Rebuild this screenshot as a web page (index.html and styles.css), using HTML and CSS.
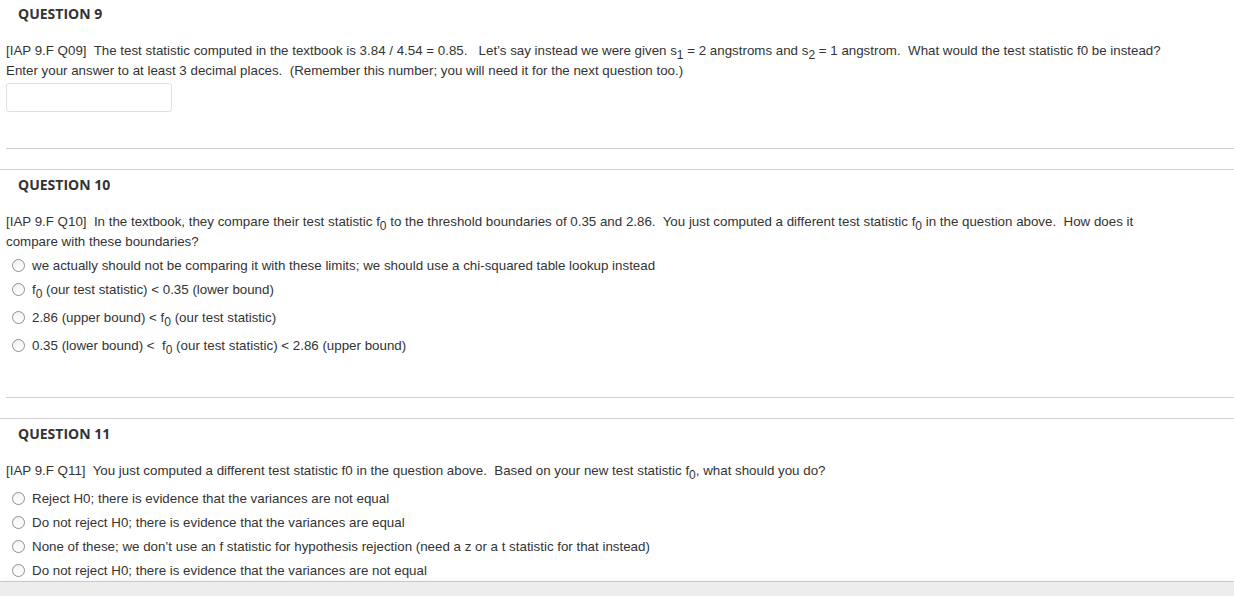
FILE: index.html
```html
<!DOCTYPE html>
<html lang="en">
<head>
<meta charset="utf-8">
<title>Quiz</title>
<link rel="stylesheet" href="styles.css">
</head>
<body>
<main class="quiz">
  <section class="question question-first">
    <h3 class="q-title">QUESTION 9</h3>
    <div class="q-body">
      <p class="q-text">[IAP 9.F Q09]&nbsp; The test statistic computed in the textbook is 3.84 / 4.54 = 0.85. &nbsp; Let’s say instead we were given s<sub>1</sub> = 2 angstroms and s<sub>2</sub> = 1 angstrom.&nbsp; What would the test statistic f0 be instead?<br>Enter your answer to at least 3 decimal places.&nbsp; (Remember this number; you will need it for the next question too.)</p>
      <input class="answer" type="text" aria-label="Answer">
    </div>
  </section>

  <section class="question">
    <h3 class="q-title">QUESTION 10</h3>
    <div class="q-body">
      <p class="q-text">[IAP 9.F Q10]&nbsp; In the textbook, they compare their test statistic f<sub>0</sub> to the threshold boundaries of 0.35 and 2.86.&nbsp; You just computed a different test statistic f<sub>0</sub> in the question above.&nbsp; How does it<br>compare with these boundaries?</p>
      <ul class="options">
        <li class="option"><input class="radio" type="radio" name="q10"><span>we actually should not be comparing it with these limits; we should use a chi-squared table lookup instead</span></li>
        <li class="option"><input class="radio" type="radio" name="q10"><span>f<sub>0</sub> (our test statistic) &lt; 0.35 (lower bound)</span></li>
        <li class="option"><input class="radio" type="radio" name="q10"><span>2.86 (upper bound) &lt; f<sub>0</sub> (our test statistic)</span></li>
        <li class="option"><input class="radio" type="radio" name="q10"><span>0.35 (lower bound) &lt;&nbsp; f<sub>0</sub> (our test statistic) &lt; 2.86 (upper bound)</span></li>
      </ul>
    </div>
  </section>

  <section class="question">
    <h3 class="q-title">QUESTION 11</h3>
    <div class="q-body">
      <p class="q-text">[IAP 9.F Q11]&nbsp; You just computed a different test statistic f0 in the question above.&nbsp; Based on your new test statistic f<sub>0</sub>, what should you do?</p>
      <ul class="options options-spaced">
        <li class="option"><input class="radio" type="radio" name="q11"><span>Reject H0; there is evidence that the variances are not equal</span></li>
        <li class="option"><input class="radio" type="radio" name="q11"><span>Do not reject H0; there is evidence that the variances are equal</span></li>
        <li class="option"><input class="radio" type="radio" name="q11"><span>None of these; we don’t use an f statistic for hypothesis rejection (need a z or a t statistic for that instead)</span></li>
        <li class="option"><input class="radio" type="radio" name="q11"><span>Do not reject H0; there is evidence that the variances are not equal</span></li>
      </ul>
    </div>
  </section>
</main>
<footer class="footer-bar"></footer>
</body>
</html>
```

FILE: styles.css
```css
html, body {
  margin: 0;
  padding: 0;
  background: #fff;
}

body {
  font-family: "Liberation Sans", Arial, sans-serif;
  font-size: 13.333px;
  line-height: 19px;
  color: #333;
  overflow: hidden;
}

.quiz {
  display: flex;
  flex-direction: column;
}

.question {
  border-top: 1px solid #cfcfcf;
  margin-top: 20px;
}

.question-first {
  border-top: none;
  margin-top: 0;
}

.q-title {
  margin: 0;
  padding: 5px 18px 0;
  font-family: "Open Sans", "Liberation Sans", sans-serif;
  font-weight: 700;
  font-size: 14px;
  line-height: 20px;
  color: #333;
}

.question-first .q-title {
  padding-top: 4px;
}

.q-body {
  margin: 17px 0 0 6px;
  padding-bottom: 36px;
  border-bottom: 1px solid #cfcfcf;
}

.q-text {
  margin: 0;
}

sub {
  font-size: 12px;
  line-height: 12px;
  vertical-align: -4px;
}

.option sub {
  line-height: 17px;
}

.answer {
  display: block;
  box-sizing: border-box;
  margin: 3px 0 0;
  width: 166px;
  height: 29px;
  border: 1px solid #e0e0e0;
  border-radius: 3px;
  background: #fff;
  font: inherit;
}

.options {
  list-style: none;
  margin: 2px 0 0;
  padding: 0;
}

.options-spaced {
  margin-top: 5px;
}

.option {
  display: flex;
  align-items: flex-start;
  gap: 7px;
  padding: 2.5px 0 2.5px 6px;
}

.radio {
  appearance: none;
  -webkit-appearance: none;
  flex: none;
  box-sizing: border-box;
  width: 13px;
  height: 13px;
  margin: 3px 0 0;
  border: 1px solid #8e8f8f;
  border-radius: 50%;
  background: linear-gradient(#f4f4f4, #ffffff);
}

.footer-bar {
  position: fixed;
  left: 0;
  right: 0;
  bottom: 0;
  height: 14px;
  background: #ededed;
  border-top: 1px solid #c9c9c9;
  box-shadow: 0 -3px 4px rgba(0, 0, 0, 0.03);
}
```
